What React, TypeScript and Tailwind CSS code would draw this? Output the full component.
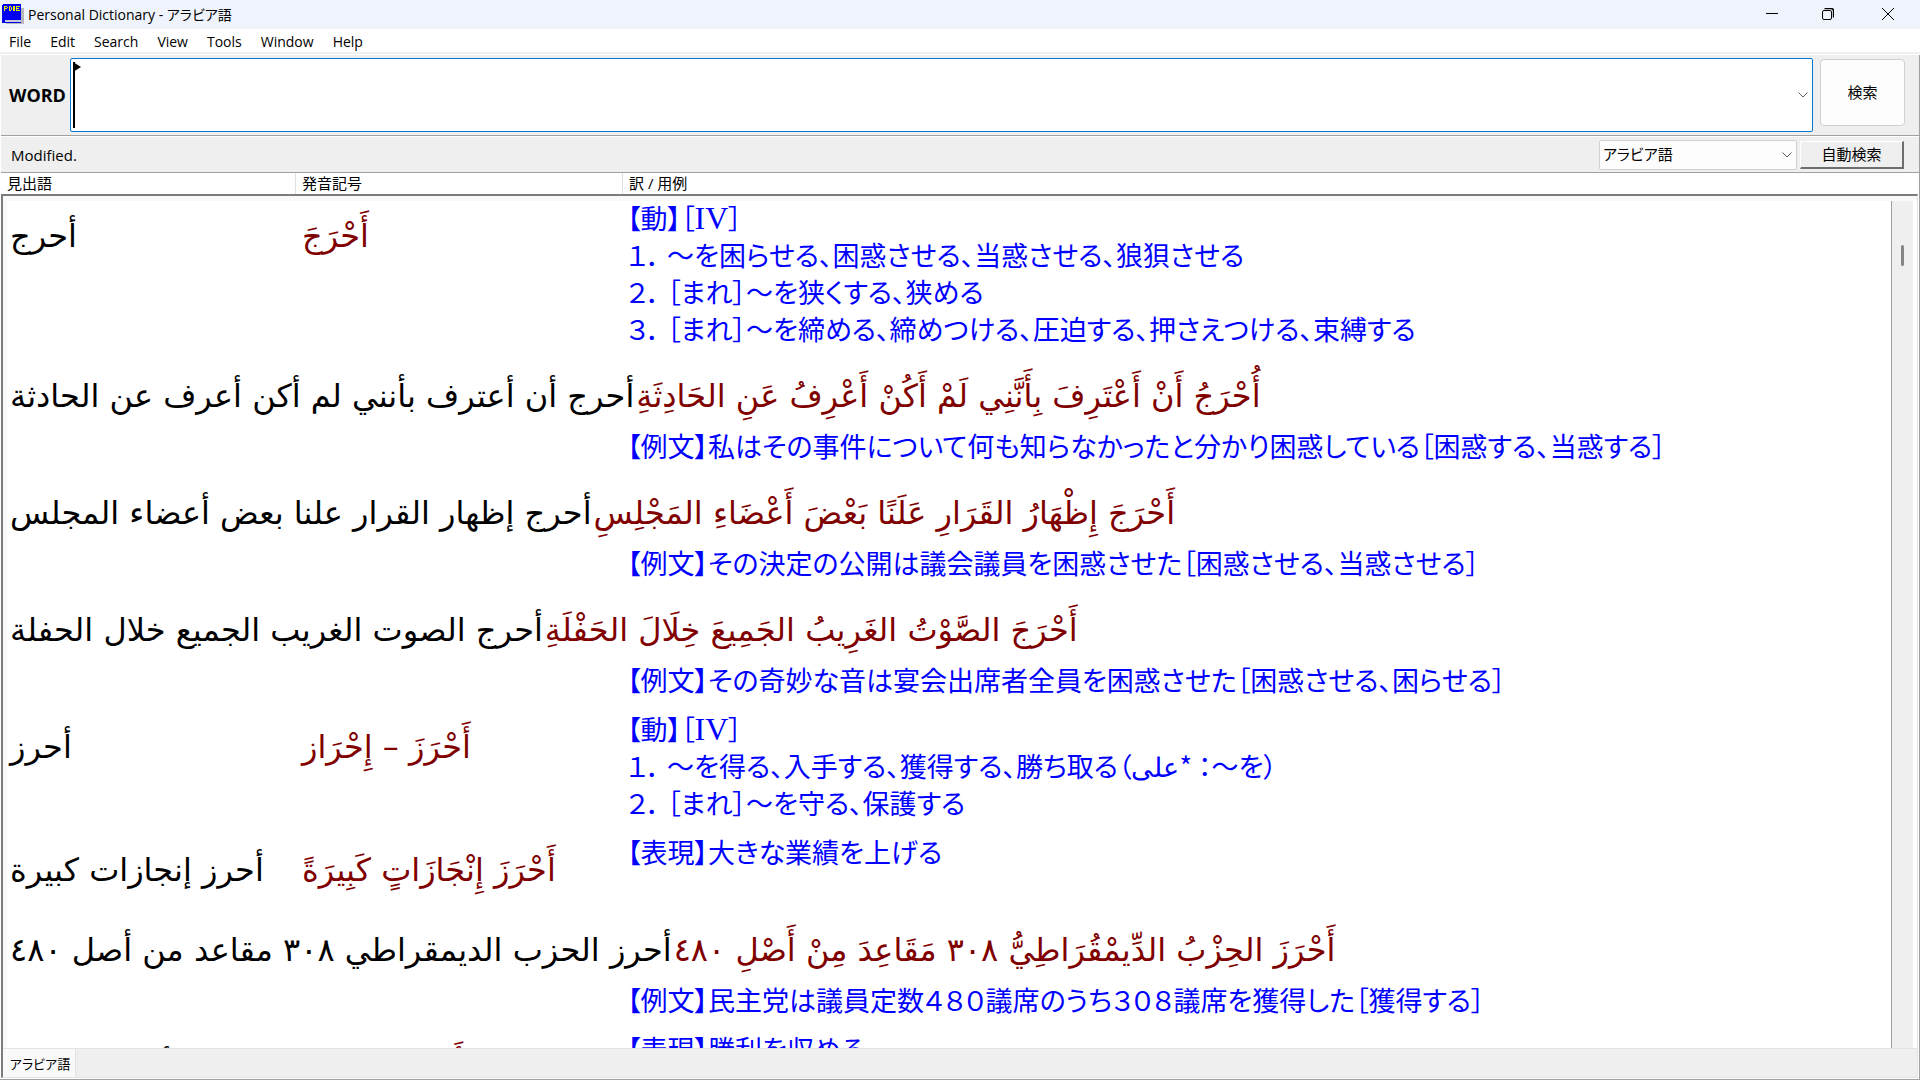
import { ReactNode } from 'react';

interface Entry {
  word: string;
  reading: string;
  // long entries push the translation onto a line of its own
  wide?: boolean;
  lines: ReactNode[];
}

const menuItems = ['File', 'Edit', 'Search', 'View', 'Tools', 'Window', 'Help'];

const verbFour = (
  <>
    【動】［<span className="font-['Liberation_Serif',serif] text-[32px]">IV</span>］
  </>
);

const entries: Entry[] = [
  {
    word: 'أحرج',
    reading: 'أَحْرَجَ',
    lines: [
      verbFour,
      '１． 〜を困らせる、困惑させる、当惑させる、狼狽させる',
      '２． ［まれ］〜を狭くする、狭める',
      '３． ［まれ］〜を締める、締めつける、圧迫する、押さえつける、束縛する',
    ],
  },
  {
    word: 'أحرج أن أعترف بأنني لم أكن أعرف عن الحادثة',
    reading: 'أُحْرَجُ أَنْ أَعْتَرِفَ بِأَنَّنِي لَمْ أَكُنْ أَعْرِفُ عَنِ الحَادِثَةِ',
    wide: true,
    lines: ['【例文】私はその事件について何も知らなかったと分かり困惑している［困惑する、当惑する］'],
  },
  {
    word: 'أحرج إظهار القرار علنا بعض أعضاء المجلس',
    reading: 'أَحْرَجَ إِظْهَارُ القَرَارِ عَلَنًا بَعْضَ أَعْضَاءِ المَجْلِسِ',
    wide: true,
    lines: ['【例文】その決定の公開は議会議員を困惑させた［困惑させる、当惑させる］'],
  },
  {
    word: 'أحرج الصوت الغريب الجميع خلال الحفلة',
    reading: 'أَحْرَجَ الصَّوْتُ الغَرِيبُ الجَمِيعَ خِلَالَ الحَفْلَةِ',
    wide: true,
    lines: ['【例文】その奇妙な音は宴会出席者全員を困惑させた［困惑させる、困らせる］'],
  },
  {
    word: 'أحرز',
    reading: 'أَحْرَزَ – إِحْرَاز',
    lines: [
      verbFour,
      '１． 〜を得る、入手する、獲得する、勝ち取る（على* ：〜を）',
      '２． ［まれ］〜を守る、保護する',
    ],
  },
  {
    word: 'أحرز إنجازات كبيرة',
    reading: 'أَحْرَزَ إِنْجَازَاتٍ كَبِيرَةً',
    lines: ['【表現】大きな業績を上げる'],
  },
  {
    word: 'أحرز الحزب الديمقراطي ٣٠٨ مقاعد من أصل ٤٨٠',
    reading: 'أَحْرَزَ الحِزْبُ الدِّيمْقُرَاطِيُّ ٣٠٨ مَقَاعِدَ مِنْ أَصْلِ ٤٨٠',
    wide: true,
    lines: ['【例文】民主党は議員定数４８０議席のうち３０８議席を獲得した［獲得する］'],
  },
  {
    word: 'أحرز انتصارا',
    reading: 'أَحْرَزَ انْتِصَارًا',
    lines: ['【表現】勝利を収める'],
  },
];

function AppIcon() {
  return (
    <svg width="22" height="21" viewBox="0 0 22 21" shapeRendering="crispEdges">
      <path d="M4 4h18v16H4z" fill="#b8b8b8" />
      <path d="M1 0h18v18H1zM0 1h1v18H0zM1 18h18v1H1z" fill="#0000f0" />
      <path d="M3 16h16v2H3z" fill="#c8c8d8" />
      <path
        d="M2 2h1v5H2zM3 2h2v1H3zM3 4h2v1H3zM5 3h1v1H5zM7 2h1v5H7zM8 2h1v1H8zM8 6h1v1H8zM9 3h1v3H9zM11 2h2v5h-2zM14 2h1v5h-1zM15 2h3v1h-3zM15 4h2v1h-2zM15 6h3v1h-3z"
        fill="#e8e800"
      />
    </svg>
  );
}

function Chevron() {
  return (
    <svg width="10" height="6" viewBox="0 0 10 6" fill="none" stroke="#5c5c5c">
      <path d="M0.5 0.5 5 5 9.5 0.5" />
    </svg>
  );
}

function TitleBar() {
  return (
    <header className="flex h-[29px] shrink-0 items-center bg-[#eff3fb] pb-px pl-0.5">
      <AppIcon />
      <h1 className="ml-1 flex-1 text-[14px]">Personal Dictionary - アラビア語</h1>
      <button aria-label="Minimize" className="flex h-full w-14 items-center justify-center">
        <svg width="12" height="12" viewBox="0 0 12 12" stroke="#000">
          <path d="M0 5.5h12" />
        </svg>
      </button>
      <button aria-label="Restore" className="flex h-full w-14 items-center justify-center">
        <svg width="12" height="12" viewBox="0 0 12 12" fill="none" stroke="#000">
          <rect x="0.5" y="2.5" width="9" height="9" rx="1.5" />
          <path d="M2.5 0.5H9a2.5 2.5 0 0 1 2.5 2.5v6.5" strokeWidth="1.4" />
        </svg>
      </button>
      <button aria-label="Close" className="flex h-full w-16 items-center justify-center">
        <svg width="12" height="12" viewBox="0 0 12 12" stroke="#000">
          <path d="M0 0 12 12M12 0 0 12" />
        </svg>
      </button>
    </header>
  );
}

function SearchBar() {
  return (
    <div className="flex h-20 shrink-0 items-center bg-[#efefef] pr-[14px] pl-2">
      <label htmlFor="word" className="w-[61px] text-[18px] font-bold">
        WORD
      </label>
      <div className="flex h-[74px] flex-1 items-center rounded-xs border border-[#0078d4] bg-white pr-px pl-0.5">
        <svg width="8" height="66" viewBox="0 0 8 66">
          <path d="M0 0h2v66H0z" />
          <path d="M0 0 8 5 0 10z" />
        </svg>
        <input id="word" className="h-full min-w-0 flex-1 bg-transparent outline-none" />
        <button aria-label="History" className="flex w-4 justify-center">
          <Chevron />
        </button>
      </div>
      <button className="mt-1 ml-[7px] h-[67px] w-[85px] self-start rounded-sm border border-[#d0d0d0] bg-[#fdfdfd] text-[15px]">
        検索
      </button>
    </div>
  );
}

function StatusRow() {
  return (
    <div className="flex h-[35px] shrink-0 items-center bg-[#efefef] pr-[15px] pl-[10px]">
      <output className="flex-1 pt-0.5 text-[15px]">Modified.</output>
      <div className="relative h-[30px] w-[198px]">
        <select
          aria-label="Dictionary"
          className="h-full w-full appearance-none rounded-xs border border-[#d0d0d0] bg-[#fdfdfd] pl-[3px] text-[15px]"
        >
          <option>アラビア語</option>
        </select>
        <span className="pointer-events-none absolute top-3 right-[5px]">
          <Chevron />
        </span>
      </div>
      <button className="ml-[3px] h-7 w-[104px] border-t border-r-2 border-b-2 border-l border-t-white border-r-[#6e6e6e] border-b-[#6e6e6e] border-l-white text-[15px]">
        自動検索
      </button>
    </div>
  );
}

function EntryRows({ entry }: { entry: Entry }) {
  const { word, reading, wide, lines } = entry;
  const translation = lines.map((line, i) => (
    <p key={i} className="h-[37px] leading-[33px]">
      {line}
    </p>
  ));
  const arabic = "h-[68px] font-['DejaVu_Sans',sans-serif] text-[32px] leading-[70px]";

  if (wide) {
    return (
      <tbody className="block pb-3">
        <tr className="flex">
          <th colSpan={2} className={`${arabic} font-normal`}>
            <bdi lang="ar">{word}</bdi>
          </th>
          <td className={`${arabic} pl-0.5 text-[#800000]`}>
            <bdi lang="ar">{reading}</bdi>
          </td>
        </tr>
        <tr className="flex">
          <td colSpan={3} className="pl-[617px] text-[#0000ff]">
            {translation}
          </td>
        </tr>
      </tbody>
    );
  }
  return (
    <tbody className="block pb-3">
      <tr className="flex items-start">
        <th className={`${arabic} w-[292px] text-left font-normal`}>
          <bdi lang="ar">{word}</bdi>
        </th>
        <td className={`${arabic} w-[325px] text-[#800000]`}>
          <bdi lang="ar">{reading}</bdi>
        </td>
        <td className="text-[#0000ff]">{translation}</td>
      </tr>
    </tbody>
  );
}

export default function App() {
  return (
    <div className="flex h-screen flex-col overflow-hidden bg-white font-['Open_Sans','Noto_Sans_CJK_JP',sans-serif] text-black [font-feature-settings:'palt']">
      <TitleBar />
      <nav className="flex h-[23px] shrink-0 items-center gap-px pt-px text-[14px]">
        {menuItems.map((item) => (
          <button key={item} className="px-[9px]">
            {item}
          </button>
        ))}
      </nav>
      <div className="mb-px h-0.5 shrink-0 bg-[#f0f0f0]" />
      <div className="flex min-h-0 flex-1 flex-col border-r border-b border-[#a0a0a0] pl-px">
        <SearchBar />
        <div className="mb-px h-px shrink-0 bg-[#a0a0a0]" />
        <StatusRow />
        <div className="h-px shrink-0 bg-[#a0a0a0]" />
        <table className="block h-[21px] shrink-0 text-[15px] leading-[21px]">
          <thead className="block">
            <tr className="flex text-left [&>th]:font-normal">
              <th className="w-[295px] border-r border-[#e0e0e0] pl-1.5">見出語</th>
              <th className="w-[327px] border-r border-[#e0e0e0] pl-1.5">発音記号</th>
              <th className="pl-1.5">訳 / 用例</th>
            </tr>
          </thead>
        </table>
        <div className="mr-px mb-px flex min-h-0 flex-1 flex-col border-t-2 border-r border-b border-l-2 border-t-[#7c7c7c] border-r-[#e3e3e3] border-b-[#e3e3e3] border-l-[#7c7c7c]">
          <div className="h-[5px] shrink-0 bg-[#f9f9f9]" />
          <div className="flex min-h-0 flex-1 border-b border-[#e3e3e3]">
            <div className="min-w-0 flex-1 overflow-hidden border-l-4 border-[#f9f9f9] pl-[3px]">
              <table className="block font-['Noto_Sans_CJK_JP',sans-serif] text-[27px] whitespace-nowrap">
                {entries.map((entry) => (
                  <EntryRows key={entry.word} entry={entry} />
                ))}
              </table>
            </div>
            <div className="mr-1 w-[22px] border-l border-[#a0a0a0] bg-[#efefef] pt-11 pl-[9px]">
              <div className="h-[21px] w-[3px] rounded-full bg-[#858585]" />
            </div>
          </div>
          <div className="flex h-7 shrink-0 bg-[#efefef]">
            <button className="w-[73px] border-r border-[#e3e3e3] bg-[#f9f9f9] pt-1 pl-0.5 text-[13px]">
              アラビア語
            </button>
          </div>
        </div>
      </div>
    </div>
  );
}
